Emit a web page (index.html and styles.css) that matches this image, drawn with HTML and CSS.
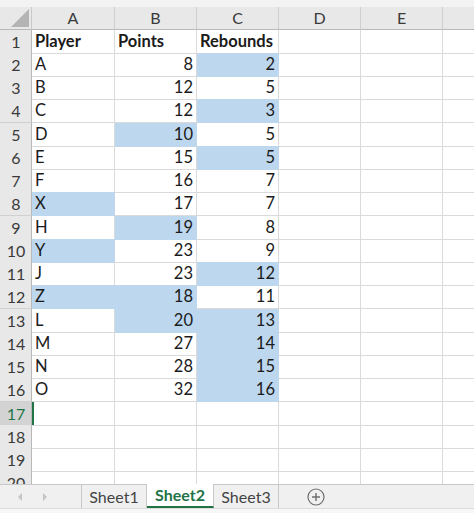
FILE: index.html
```html
<!DOCTYPE html>
<html>
<head>
<meta charset="utf-8">
<link rel="stylesheet" href="styles.css">
</head>
<body>
<div class="app">
  <div class="topband"></div>
  <div class="sheet">
    <div class="row head">
      <div class="corner"><svg width="18" height="18" viewBox="0 0 18 18"><polygon points="18,0 18,18 0,18" fill="#b4b4b4"/></svg></div>
      <div class="ch">A</div><div class="ch">B</div><div class="ch">C</div><div class="ch">D</div><div class="ch">E</div><div class="ch last"></div>
    </div>
    <div class="row"><div class="rh">1</div><div class="c b">Player</div><div class="c b">Points</div><div class="c b">Rebounds</div><div class="c"></div><div class="c"></div><div class="c last"></div></div>
    <div class="row"><div class="rh">2</div><div class="c">A</div><div class="c n">8</div><div class="c n hl">2</div><div class="c"></div><div class="c"></div><div class="c last"></div></div>
    <div class="row"><div class="rh">3</div><div class="c">B</div><div class="c n">12</div><div class="c n">5</div><div class="c"></div><div class="c"></div><div class="c last"></div></div>
    <div class="row"><div class="rh">4</div><div class="c">C</div><div class="c n">12</div><div class="c n hl">3</div><div class="c"></div><div class="c"></div><div class="c last"></div></div>
    <div class="row"><div class="rh">5</div><div class="c">D</div><div class="c n hl">10</div><div class="c n">5</div><div class="c"></div><div class="c"></div><div class="c last"></div></div>
    <div class="row"><div class="rh">6</div><div class="c">E</div><div class="c n">15</div><div class="c n hl">5</div><div class="c"></div><div class="c"></div><div class="c last"></div></div>
    <div class="row"><div class="rh">7</div><div class="c">F</div><div class="c n">16</div><div class="c n">7</div><div class="c"></div><div class="c"></div><div class="c last"></div></div>
    <div class="row"><div class="rh">8</div><div class="c hl">X</div><div class="c n">17</div><div class="c n">7</div><div class="c"></div><div class="c"></div><div class="c last"></div></div>
    <div class="row"><div class="rh">9</div><div class="c">H</div><div class="c n hl">19</div><div class="c n">8</div><div class="c"></div><div class="c"></div><div class="c last"></div></div>
    <div class="row"><div class="rh">10</div><div class="c hl">Y</div><div class="c n">23</div><div class="c n">9</div><div class="c"></div><div class="c"></div><div class="c last"></div></div>
    <div class="row"><div class="rh">11</div><div class="c">J</div><div class="c n">23</div><div class="c n hl">12</div><div class="c"></div><div class="c"></div><div class="c last"></div></div>
    <div class="row"><div class="rh">12</div><div class="c hl">Z</div><div class="c n hl">18</div><div class="c n">11</div><div class="c"></div><div class="c"></div><div class="c last"></div></div>
    <div class="row"><div class="rh">13</div><div class="c">L</div><div class="c n hl">20</div><div class="c n hl">13</div><div class="c"></div><div class="c"></div><div class="c last"></div></div>
    <div class="row"><div class="rh">14</div><div class="c">M</div><div class="c n">27</div><div class="c n hl">14</div><div class="c"></div><div class="c"></div><div class="c last"></div></div>
    <div class="row"><div class="rh">15</div><div class="c">N</div><div class="c n">28</div><div class="c n hl">15</div><div class="c"></div><div class="c"></div><div class="c last"></div></div>
    <div class="row"><div class="rh">16</div><div class="c">O</div><div class="c n">32</div><div class="c n hl">16</div><div class="c"></div><div class="c"></div><div class="c last"></div></div>
    <div class="row"><div class="rh sel">17</div><div class="c active"></div><div class="c"></div><div class="c"></div><div class="c"></div><div class="c"></div><div class="c last"></div></div>
    <div class="row"><div class="rh">18</div><div class="c"></div><div class="c"></div><div class="c"></div><div class="c"></div><div class="c"></div><div class="c last"></div></div>
    <div class="row"><div class="rh">19</div><div class="c"></div><div class="c"></div><div class="c"></div><div class="c"></div><div class="c"></div><div class="c last"></div></div>
    <div class="row"><div class="rh">20</div><div class="c"></div><div class="c"></div><div class="c"></div><div class="c"></div><div class="c"></div><div class="c last"></div></div>
  </div>
  <div class="tabbar">
    <div class="nav">
      <svg width="8" height="10" viewBox="0 0 8 10"><polygon points="6,1 2,5 6,9" fill="#c4c4c4"/></svg>
      <svg width="8" height="10" viewBox="0 0 8 10"><polygon points="2,1 6,5 2,9" fill="#c4c4c4"/></svg>
    </div>
    <div class="tab">Sheet1</div>
    <div class="tab active">Sheet2</div>
    <div class="tab">Sheet3</div>
    <div class="add"><svg width="18" height="18" viewBox="0 0 18 18"><circle cx="9" cy="9" r="8" fill="none" stroke="#6e6e6e" stroke-width="1.2"/><path d="M9 5v8M5 9h8" stroke="#6e6e6e" stroke-width="1.4"/></svg></div>
  </div>
  <div class="bottom"></div>
</div>
</body>
</html>
```
FILE: styles.css
```css
html, body {
  margin: 0;
  padding: 0;
  background: #ffffff;
}
.app {
  width: 474px;
  height: 513px;
  overflow: hidden;
  display: flex;
  flex-direction: column;
  font-family: Lato, "Open Sans", sans-serif;
  font-size: 16.5px;
  color: #1b1b1b;
}
.topband {
  height: 7px;
  background: #f3f3f3;
  flex: none;
}
.sheet {
  height: 477px;
  overflow: hidden;
  flex: none;
}
.row {
  display: grid;
  grid-template-columns: 32px 83px 82px 82px 82px 82px 1fr;
  height: 23.25px;
}
.row.head {
  height: 22.5px;
  background: #e8e8e8;
}
.corner {
  border-right: 1px solid #c9c9c9;
  border-bottom: 1px solid #b8b8b8;
  display: flex;
  align-items: flex-end;
  justify-content: flex-end;
  padding: 0 2px 2px 0;
  box-sizing: border-box;
}
.ch {
  box-sizing: border-box;
  border-right: 1px solid #cfcfcf;
  border-bottom: 1px solid #b8b8b8;
  text-align: center;
  color: #3a3a3a;
  line-height: 21px;
  font-size: 16px;
}
.ch.last, .c.last { border-right: none; }
.rh {
  box-sizing: border-box;
  background: #e8e8e8;
  border-right: 1px solid #b8b8b8;
  border-bottom: 1px solid #d0d0d0;
  text-align: center;
  color: #3a3a3a;
  line-height: 23px;
  font-size: 16px;
  padding-left: 1px;
}
.rh.sel {
  background: #d3d3d3;
  color: #217346;
  border-bottom-color: #bcbcbc;
}
.c {
  box-sizing: border-box;
  border-right: 1px solid #dadada;
  border-bottom: 1px solid #dadada;
  padding: 0 3px;
  line-height: 23px;
  white-space: nowrap;
  overflow: hidden;
}
.c.b { font-weight: bold; }
.c.n { text-align: right; }
.c.hl { background: #bdd7ee; border-color: #bdd7ee; }
.c.active { box-shadow: inset 2px 0 0 #217346; }
.tabbar {
  height: 23px;
  flex: none;
  background: #f0f0f0;
  border-top: 1px solid #c8c8c8;
  display: flex;
  align-items: stretch;
  font-size: 16px;
  color: #444;
}
.nav {
  width: 82px;
  box-sizing: border-box;
  display: flex;
  align-items: center;
  gap: 17px;
  padding-left: 16px;
  border-right: 1px solid #c8c8c8;
}
.tab {
  width: 65px;
  box-sizing: border-box;
  text-align: center;
  line-height: 23px;
  border-right: 1px solid #c8c8c8;
}
.tab.active {
  width: 67px;
  background: #ffffff;
  color: #217346;
  font-weight: bold;
  border-bottom: 2px solid #217346;
  line-height: 22px;
  margin-top: -1px;
}
.add {
  display: flex;
  align-items: center;
  padding-left: 28px;
}
.bottom {
  flex: 1;
  background: #f7f7f7;
  border-top: 1px solid #dcdcdc;
}
```
